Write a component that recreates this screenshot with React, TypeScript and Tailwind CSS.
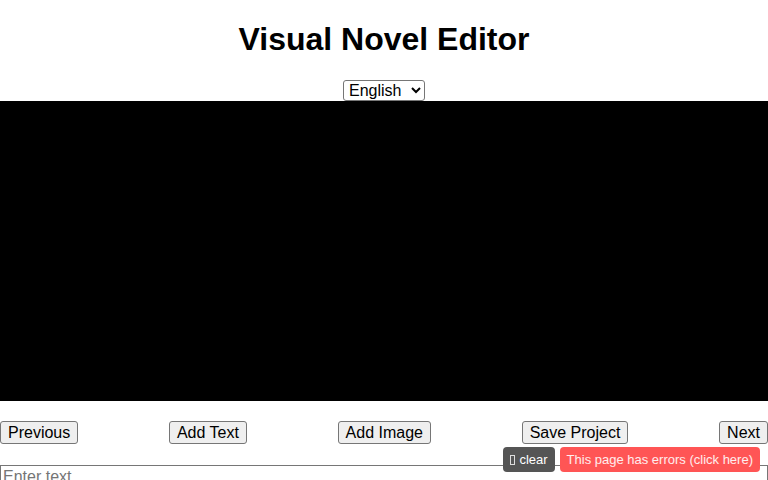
import React, { useState } from 'react';

const buttonClass =
  'bg-[#efefef] border border-[#767676] rounded-[3px] px-[7px] py-[1px] text-[16px] leading-[19px] text-black';

export default function App() {
  const [text, setText] = useState('');
  const [lang, setLang] = useState('en');

  return (
    <div className="font-['Liberation_Sans',Arial,sans-serif] text-black bg-white min-h-[480px]">
      <h1 className="text-[32px] font-bold text-center leading-[37px] pt-[21px] pb-[22px]">Visual Novel Editor</h1>

      <div className="flex justify-center">
        <select
          value={lang}
          onChange={(e) => setLang(e.target.value)}
          className="h-[21px] w-[82px] border border-[#767676] rounded-[3px] bg-white text-[16px] leading-[19px] pl-[1px]"
        >
          <option value="en">English</option>
          <option value="ja">日本語</option>
        </select>
      </div>

      {/* Stage */}
      <div className="w-full h-[300px] bg-black" />

      {/* Toolbar */}
      <div className="flex justify-between items-center mt-[20px] mb-[21px]">
        <button className={buttonClass}>Previous</button>
        <button className={buttonClass}>Add Text</button>
        <button className={buttonClass}>Add Image</button>
        <button className={buttonClass}>Save Project</button>
        <button className={buttonClass}>Next</button>
      </div>

      <input
        value={text}
        onChange={(e) => setText(e.target.value)}
        placeholder="Enter text"
        className="block w-full border border-[#767676] px-[2px] py-[1px] text-[16px] leading-[19px] placeholder:text-[#757575]"
      />

      {/* Error overlay */}
      <div className="fixed right-[8px] bottom-[8px] flex gap-[5px] text-[13px] leading-[15px]">
        <button className="bg-[#555] text-white rounded-[4px] px-[7px] py-[5px] flex items-center gap-[4px]">
          <span className="inline-block w-[5px] h-[10px] border border-white/80" />
          clear
        </button>
        <button className="bg-[#f55] text-white/90 rounded-[4px] px-[7px] py-[5px]">
          This page has errors (click here)
        </button>
      </div>
    </div>
  );
}
